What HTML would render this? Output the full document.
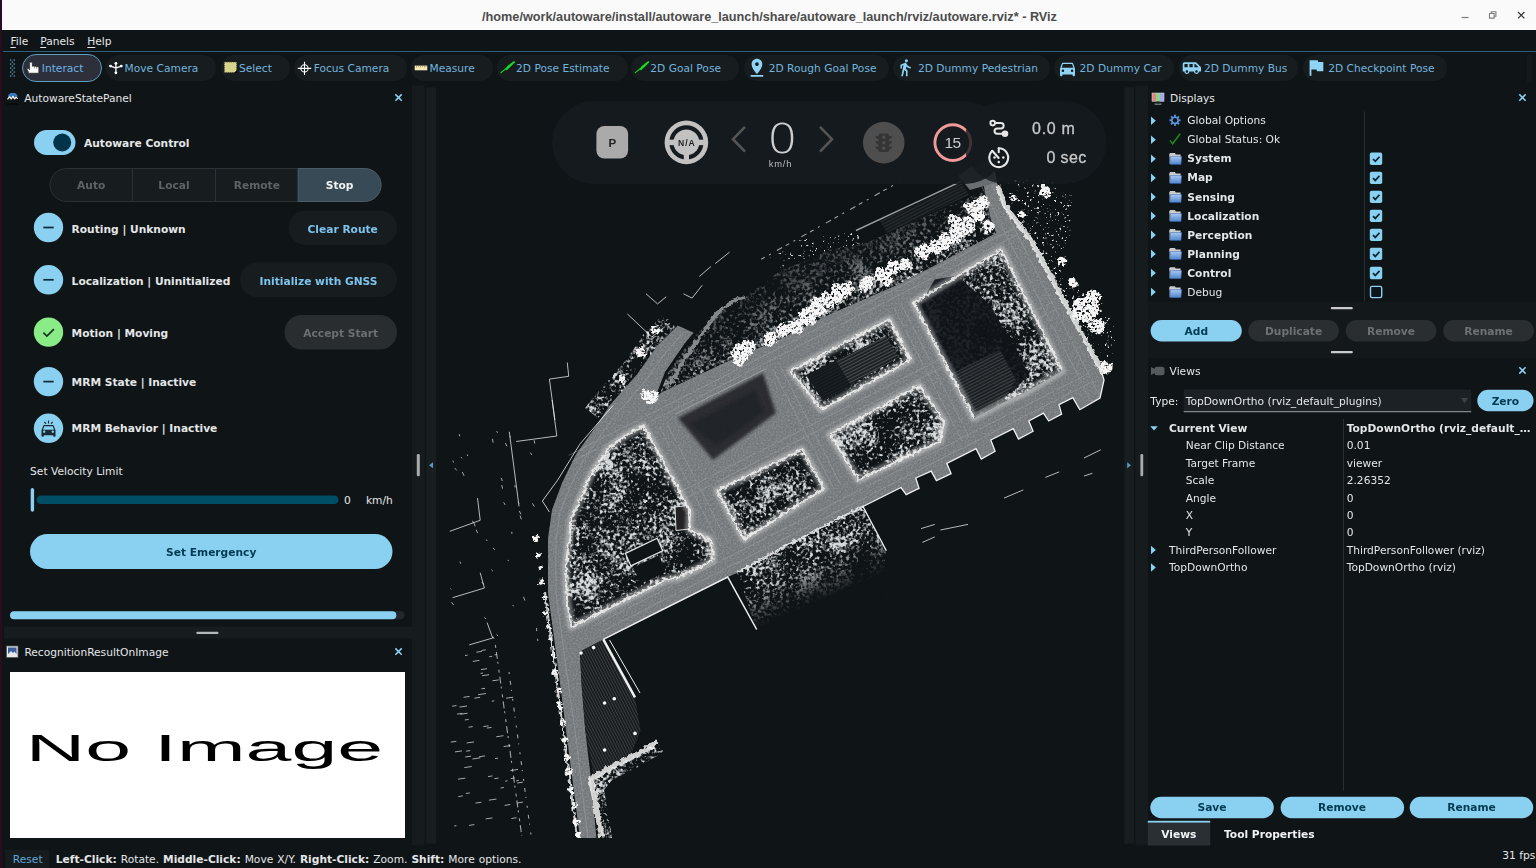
<!DOCTYPE html>
<html lang="en">
<head>
<meta charset="utf-8">
<title>RViz</title>
<style>
*{box-sizing:border-box;margin:0;padding:0}
html,body{width:1536px;height:868px;overflow:hidden;background:#0f1417}
body{position:relative;font-family:"DejaVu Sans","Liberation Sans",sans-serif;font-size:10.667px;color:#e4e6e7;line-height:1}
.abs{position:absolute}
.t{position:absolute;white-space:pre;line-height:14px;height:14px}
.b{font-weight:700}
/* title bar */
#titlebar{position:absolute;left:0;top:0;width:1536px;height:30.2px;background:#fafafa}
#edge{position:absolute;left:0;top:0;width:2.4px;height:868px;background:#2b0c1f}
#title{position:absolute;left:0;width:1536px;top:9.6px;text-align:center;font-family:"Liberation Sans","DejaVu Sans",sans-serif;font-weight:700;font-size:12.7px;color:#4c4c4c;line-height:15px;padding-left:3px}
/* menu */
#menuline{position:absolute;left:2.5px;top:51.1px;width:1534px;height:1.4px;background:#2f5f78}
.menu{position:absolute;top:34.8px;line-height:14px;color:#e4e6e7}
.menu u{text-decoration:underline;text-underline-offset:1.5px}
/* toolbar */
.pill{position:absolute;top:54.5px;height:27px;border-radius:13.5px;background:#171c1f;color:#72b4de;line-height:27px;white-space:pre}
.pill span{position:absolute;top:0;line-height:27px}
.pill svg{position:absolute}
#noimg{position:absolute;left:-3.1px;top:51.3px;width:394.900px;text-align:center;font-family:"Liberation Sans",sans-serif;font-size:37px;line-height:52px;color:#000;transform:scaleX(2.228);transform-origin:197.45px 0;white-space:pre}
</style>
</head>
<body>

<div id="titlebar"></div>
<div id="title">/home/work/autoware/install/autoware_launch/share/autoware_launch/rviz/autoware.rviz* - RViz</div>
<div id="edge"></div>
<svg class="abs" style="left:1450px;top:0" width="86" height="30" viewBox="1450 0 86 30">
<path d="M1461.5 17.5h7" stroke="#7d7d7d" stroke-width="1.2" fill="none"/>
<path d="M1489.5 13.5h4.6v4.6h-4.6z M1491.3 13.3v-1.6h4.6v4.6h-1.6" stroke="#7d7d7d" stroke-width="1.1" fill="none"/>
<path d="M1518 12l6.4 6.4M1524.4 12l-6.4 6.4" stroke="#3c3c3c" stroke-width="1.3" fill="none"/>
</svg>
<div class="menu" style="left:10.4px"><u>F</u>ile</div>
<div class="menu" style="left:40.2px"><u>P</u>anels</div>
<div class="menu" style="left:87.3px"><u>H</u>elp</div>
<div id="menuline"></div>
<svg class="abs" style="left:0;top:52px;z-index:3" width="1536" height="34" viewBox="0 52 1536 34"><g fill="#5ea5cc"><rect x="10" y="59.4" width="1.3" height="1.3"/><rect x="13.6" y="59.4" width="1.3" height="1.3"/><rect x="11.8" y="61.4" width="1.3" height="1.3"/><rect x="10" y="63.4" width="1.3" height="1.3"/><rect x="13.6" y="63.4" width="1.3" height="1.3"/><rect x="11.8" y="65.4" width="1.3" height="1.3"/><rect x="10" y="67.4" width="1.3" height="1.3"/><rect x="13.6" y="67.4" width="1.3" height="1.3"/><rect x="11.8" y="69.4" width="1.3" height="1.3"/><rect x="10" y="71.4" width="1.3" height="1.3"/><rect x="13.6" y="71.4" width="1.3" height="1.3"/><rect x="11.8" y="73.4" width="1.3" height="1.3"/><rect x="10" y="75.4" width="1.3" height="1.3"/><rect x="13.6" y="75.4" width="1.3" height="1.3"/></g><rect x="1527" y="55" width="4.5" height="27" fill="#14191c"/><path d="M29.600 63.300a1.350 1.350 0 0 1 2.700 0V66.500c.1-.6 2-.6 2.100 .2c.1-.6 2-.5 2.100 .3c.2-.5 2.200-.3 2.300 .7V73.200H28.300V71.600L27.100 69.700c-.2-.9 1-1.500 1.600-.9L29.600 69.800z" fill="#fff" stroke="#111" stroke-width=".6" stroke-linejoin="round"/><path d="M34.400 66.900v1.600M36.500 67.200v1.400" stroke="#333" stroke-width=".5"/><g stroke="#fff" stroke-width="1.3" fill="none" stroke-linecap="round"><path d="M115.900 63.600v9M110.700 66.100l5.200 1.900 5.200-1.900"/></g><g fill="#fff"><circle cx="115.900" cy="63.300" r="1.400"/><circle cx="115.900" cy="72.800" r="1.400"/><circle cx="110.500" cy="66.100" r="1.400"/><circle cx="121.300" cy="66.100" r="1.400"/></g><rect x="224.300" y="62" width="12.400" height="10.600" fill="#d8d48e" stroke="#3a3a28" stroke-width=".8" stroke-dasharray="1.200 1"/><path d="M237 72.900h-3l3-3z" fill="#000"/><g stroke="#fff" stroke-width="1.100" fill="none"><circle cx="304.500" cy="68.400" r="3.600"/><path d="M297.800 68.400h13.400M304.500 61.700v13.400"/></g><rect x="414.700" y="65.600" width="12.600" height="4.700" fill="#f5e9b8"/><path d="M416.500 65.600v2M418.500 65.600v1.500M420.500 65.600v2M422.500 65.600v1.500M424.500 65.600v2M426 65.600v1.500" stroke="#8a7a4a" stroke-width=".6"/><path d="M501.0 72.600L514.0 62.100" stroke="#10e020" stroke-width="1.200" stroke-linecap="round"/><path d="M506.5 69.400L514.2 62L508.3 66.300z" fill="#10e020" stroke="#10e020" stroke-width="1.600" stroke-linejoin="round"/><path d="M635.3 72.600L648.3 62.100" stroke="#10e020" stroke-width="1.200" stroke-linecap="round"/><path d="M640.8 69.400L648.5 62L642.5999999999999 66.300z" fill="#10e020" stroke="#10e020" stroke-width="1.600" stroke-linejoin="round"/><path transform="translate(746.2 57) scale(0.8958)" fill="#8fd3f5" d="M18 8c0-3.310-2.690-6-6-6S6 4.690 6 8c0 4.500 6 11 6 11s6-6.500 6-11zm-8 0c0-1.100.9-2 2-2s2 .9 2 2-.89 2-2 2c-1.100 0-2-.9-2-2zM5 20v2h14v-2H5z"/><path transform="translate(895.7 58.1) scale(0.7917)" fill="#8fd3f5" d="M13.5 5.5c1.1 0 2-.9 2-2s-.9-2-2-2-2 .9-2 2 .9 2 2 2zM9.8 8.9L7 23h2.1l1.8-8 2.1 2v6h2v-7.5l-2.1-2 .6-3C14.800 12 16.800 13 19 13v-2c-1.900 0-3.500-1-4.300-2.400l-1-1.600c-.4-.6-1-1-1.700-1-.3 0-.5.1-.8.1L6 8.300V13h2V9.600l1.800-.7"/><path transform="translate(1057.5 58.7) scale(0.8333)" fill="#8fd3f5" d="M18.92 6.01C18.72 5.42 18.16 5 17.5 5h-11c-.66 0-1.210.42-1.420 1.010L3 12v8c0 .55.45 1 1 1h1c.55 0 1-.45 1-1v-1h12v1c0 .55.45 1 1 1h1c.55 0 1-.45 1-1v-8l-2.080-5.990zM6.500 16c-.83 0-1.500-.67-1.500-1.500S5.670 13 6.500 13s1.500.67 1.500 1.500S7.330 16 6.500 16zm11 0c-.83 0-1.500-.67-1.500-1.500s.67-1.500 1.500-1.500 1.500.67 1.500 1.500-.67 1.500-1.500 1.500zM5 11l1.500-4.500h11L19 11H5z"/><path transform="translate(1181.9 58.1) scale(0.8333)" fill="#8fd3f5" d="M17 5H3c-1.100 0-2 .89-2 2v9h2c0 1.650 1.340 3 3 3s3-1.350 3-3h5.500c0 1.650 1.340 3 3 3s3-1.350 3-3H23v-5l-6-6zM3 11V7h4v4H3zm3 6.500c-.83 0-1.500-.67-1.500-1.500s.67-1.500 1.500-1.500 1.500.67 1.500 1.500-.67 1.500-1.500 1.500zm7-6.500H9V7h4v4zm4.500 6.500c-.83 0-1.500-.67-1.500-1.500s.67-1.500 1.500-1.500 1.500.67 1.500 1.500-.67 1.500-1.500 1.500zM15 11V7h1l4 4h-5z"/><path transform="translate(1305 56.6) scale(0.9167)" fill="#8fd3f5" d="M14.4 6L14 4H5v17h2v-7h5.600l.4 2h7V6z"/></svg>
<div class="pill" style="left:22px;width:80px;top:54.3px;height:27.7px;border-radius:14px;background:#2d2f3a;border:1.2px solid #5f9dbf"></div><div class="t" style="left:41.8px;top:61.5px;color:#6cb2e6">Interact</div>
<div class="pill" style="left:106px;width:109.7px;top:55.2px;height:26.2px"></div><div class="t" style="left:124.6px;top:61.5px;color:#72b4de">Move Camera</div>
<div class="pill" style="left:221px;width:69.0px;top:55.2px;height:26.2px"></div><div class="t" style="left:239px;top:61.5px;color:#72b4de">Select</div>
<div class="pill" style="left:294.3px;width:112.3px;top:55.2px;height:26.2px"></div><div class="t" style="left:313.7px;top:61.5px;color:#72b4de">Focus Camera</div>
<div class="pill" style="left:411px;width:82.3px;top:55.2px;height:26.2px"></div><div class="t" style="left:429.5px;top:61.5px;color:#72b4de">Measure</div>
<div class="pill" style="left:497px;width:130.5px;top:55.2px;height:26.2px"></div><div class="t" style="left:516.1px;top:61.5px;color:#72b4de">2D Pose Estimate</div>
<div class="pill" style="left:631.4px;width:108.0px;top:55.2px;height:26.2px"></div><div class="t" style="left:650.3px;top:61.5px;color:#72b4de">2D Goal Pose</div>
<div class="pill" style="left:743.7px;width:144.9px;top:55.2px;height:26.2px"></div><div class="t" style="left:768.7px;top:61.5px;color:#72b4de">2D Rough Goal Pose</div>
<div class="pill" style="left:892.5px;width:157.8px;top:55.2px;height:26.2px"></div><div class="t" style="left:917.9px;top:61.5px;color:#72b4de">2D Dummy Pedestrian</div>
<div class="pill" style="left:1054.2px;width:120.1px;top:55.2px;height:26.2px"></div><div class="t" style="left:1079.6px;top:61.5px;color:#72b4de">2D Dummy Car</div>
<div class="pill" style="left:1178.6px;width:119.7px;top:55.2px;height:26.2px"></div><div class="t" style="left:1204px;top:61.5px;color:#72b4de">2D Dummy Bus</div>
<div class="pill" style="left:1303px;width:143.5px;top:55.2px;height:26.2px"></div><div class="t" style="left:1328.2px;top:61.5px;color:#72b4de">2D Checkpoint Pose</div>

<svg class="abs" style="left:0;top:86px;z-index:2" width="412" height="560" viewBox="0 86 412 560">
<!-- title icon -->
<path d="M8.2 95.3l2.300-2.300h4.600l2.300 2.300v1.500h-9.200z" fill="#3a78c2"/>
<path d="M7.5 99.3l2.200-2.600 1.500 2.300 1.700-2.600 1.700 2.500 1.400-1.800 1.600 1.600" stroke="#fff" stroke-width="1.200" fill="none" stroke-linejoin="round"/>
<path d="M6.500 104h12" stroke="#000" stroke-width=".8"/>
<!-- close x -->
<path d="M395.400 94.400l6.300 6.300M401.700 94.400l-6.300 6.300" stroke="#8fd3f5" stroke-width="1.500"/>
<!-- toggle -->
<rect x="34" y="130" width="41.500" height="25" rx="12.500" fill="#8ad0f0"/>
<circle cx="62.200" cy="142.500" r="9" fill="#00344a"/>
<!-- segmented -->
<path d="M66.500 168.500h231.700v33h-231.700a16.500 16.500 0 0 1 0-33z" fill="#171c1f" stroke="#2c3135" stroke-width="1"/>
<path d="M298.200 168.500h66.400a16.500 16.500 0 0 1 0 33h-66.400z" fill="#374a55" stroke="#4b5c66" stroke-width="1"/>
<path d="M132.500 168.500v33M215.500 168.500v33" stroke="#2c3135" stroke-width="1"/>
<!-- status circles -->
<circle cx="48.500" cy="227.500" r="14.700" fill="#8ad0f0"/><path d="M43.300 227.500h10.400" stroke="#0f2a38" stroke-width="1.700"/>
<circle cx="48.500" cy="279.800" r="14.700" fill="#8ad0f0"/><path d="M43.300 279.800h10.400" stroke="#0f2a38" stroke-width="1.700"/>
<circle cx="48.500" cy="332.100" r="14.700" fill="#8aec86"/><path d="M43.400 332.600l3.500 3.500 7-7" stroke="#12301a" stroke-width="1.600" fill="none"/>
<circle cx="48.500" cy="381.600" r="14.700" fill="#8ad0f0"/><path d="M43.300 381.600h10.400" stroke="#0f2a38" stroke-width="1.700"/>
<circle cx="48.500" cy="428.300" r="14.700" fill="#8ad0f0"/>
<g transform="translate(39.140 418.070) scale(.78)" fill="#1a2a33"><path d="M18.920 10.010C18.720 9.420 18.160 9 17.500 9h-11c-.66 0-1.210.42-1.420 1.010L3 16v7c0 .55.45 1 1 1h1c.55 0 1-.45 1-1v-1h12v1c0 .55.45 1 1 1h1c.55 0 1-.45 1-1v-7l-2.080-5.990zM6.500 19c-.83 0-1.500-.67-1.500-1.500S5.670 16 6.500 16s1.500.67 1.500 1.500S7.330 19 6.500 19zm11 0c-.83 0-1.500-.67-1.500-1.500s.67-1.500 1.500-1.500 1.500.67 1.500 1.500-.67 1.500-1.500 1.500zM5 15l1.500-4.500h11L19 15H5z"/><path d="M11.300 3h1.400v4h-1.400zM6.100 5.400l1-1 2.300 2.400-1 1zM17.900 5.400l-1-1-2.300 2.400 1 1z"/></g>
<!-- buttons -->
<rect x="288.500" y="210.500" width="108.500" height="34.500" rx="17.250" fill="#171c1f"/>
<rect x="240" y="262.500" width="157" height="34.500" rx="17.250" fill="#171c1f"/>
<rect x="284.500" y="315" width="112.500" height="34.500" rx="17.250" fill="#292d30"/>
<!-- slider -->
<rect x="36.500" y="495.400" width="302" height="8.600" rx="4.300" fill="#004d66"/>
<rect x="30.700" y="488" width="3.400" height="23.700" rx="1.700" fill="#8ad0f0"/>
<!-- emergency -->
<rect x="30" y="534" width="362.500" height="35" rx="17.500" fill="#8ad0f0"/>
<!-- h scrollbar -->
<rect x="10" y="611.200" width="394.500" height="8" rx="4" fill="#23282c"/>
<rect x="10" y="611.200" width="386.300" height="8" rx="4" fill="#8ad0f0"/>
<!-- splitter band -->
<rect x="4" y="626.600" width="408" height="12" fill="#171c1f"/>
<rect x="196.300" y="631.800" width="22.200" height="2.200" rx="1" fill="#b4b8ba"/>
</svg>
<div class="t " style="left:24.2px;top:91.6px;">AutowareStatePanel</div>
<div class="t b" style="left:84px;top:136.6px;">Autoware Control</div>
<div class="t b" style="left:-8.8px;width:200px;text-align:center;top:178.6px;color:#5e6366;z-index:3">Auto</div>
<div class="t b" style="left:74.0px;width:200px;text-align:center;top:178.6px;color:#5e6366;z-index:3">Local</div>
<div class="t b" style="left:156.8px;width:200px;text-align:center;top:178.6px;color:#5e6366;z-index:3">Remote</div>
<div class="t b" style="left:239.6px;width:200px;text-align:center;top:178.6px;color:#f0f2f3;z-index:3">Stop</div>
<div class="t b" style="left:71.6px;top:222.6px;">Routing | Unknown</div>
<div class="t b" style="left:71.6px;top:274.6px;">Localization | Uninitialized</div>
<div class="t b" style="left:71.6px;top:326.6px;">Motion | Moving</div>
<div class="t b" style="left:71.6px;top:375.6px;">MRM State | Inactive</div>
<div class="t b" style="left:71.6px;top:421.6px;">MRM Behavior | Inactive</div>
<div class="t b" style="left:242.7px;width:200px;text-align:center;top:222.6px;color:#7cc4ee;z-index:3">Clear Route</div>
<div class="t b" style="left:218.5px;width:200px;text-align:center;top:274.6px;color:#7cc4ee;z-index:3">Initialize with GNSS</div>
<div class="t b" style="left:240.7px;width:200px;text-align:center;top:326.6px;color:#6a6f72;z-index:3">Accept Start</div>
<div class="t " style="left:30.1px;top:464.6px;">Set Velocity Limit</div>
<div class="t " style="left:344px;top:493.6px;">0</div>
<div class="t " style="left:365.9px;top:493.6px;">km/h</div>
<div class="t b" style="left:111.2px;width:200px;text-align:center;top:545.6px;color:#003a52;z-index:3">Set Emergency</div>
<svg class="abs" style="left:0;top:640px;z-index:2" width="412" height="30" viewBox="0 640 412 30">
<rect x="6.500" y="646" width="11.500" height="11.500" fill="#e8e8e8" stroke="#555" stroke-width=".8"/>
<rect x="8" y="647.500" width="8.500" height="6.500" fill="#3b5f9a"/>
<path d="M8 654l3-3 2 2 1.500-1.500 2 2.500z" fill="#dfe6f0"/>
<path d="M395.400 648.400l6.300 6.300M401.700 648.400l-6.300 6.300" stroke="#8fd3f5" stroke-width="1.500"/>
</svg>
<div class="t " style="left:24.4px;top:645.6px;">RecognitionResultOnImage</div>
<div class="abs" style="left:9.800px;top:672.200px;width:394.900px;height:165.800px;background:#fff;overflow:hidden"><div id="noimg">No Image</div></div>
<svg class="abs" style="left:436px;top:86px" width="688" height="752" viewBox="436 86 688 752">
<defs>
<filter id="veg" filterUnits="userSpaceOnUse" x="436" y="86" width="688" height="752" color-interpolation-filters="sRGB">
<feTurbulence type="fractalNoise" baseFrequency="0.3" numOctaves="2" seed="7" result="n"/>
<feColorMatrix in="n" type="matrix" values="0 0 0 0 1  0 0 0 0 1  0 0 0 0 1  .5 .5 0 0 0" result="a1"/>
<feTurbulence type="fractalNoise" baseFrequency="0.04" numOctaves="2" seed="21" result="m"/>
<feColorMatrix in="m" type="matrix" values="0 0 0 0 1  0 0 0 0 1  0 0 0 0 1  .5 .5 0 0 0" result="a2"/>
<feComposite in="a1" in2="a2" operator="arithmetic" k1="0" k2="1" k3=".5" k4="-.25" result="mix"/>
<feColorMatrix in="mix" type="matrix" values="0 0 0 0 .84  0 0 0 0 .85  0 0 0 0 .86  0 0 0 5.5 -2.62" result="sp"/>
<feComposite in="sp" in2="SourceGraphic" operator="in"/>
</filter>
<filter id="veg2" filterUnits="userSpaceOnUse" x="436" y="86" width="688" height="752" color-interpolation-filters="sRGB">
<feTurbulence type="fractalNoise" baseFrequency="0.4" numOctaves="2" seed="11" result="n"/>
<feColorMatrix in="n" type="matrix" values="0 0 0 0 .9  0 0 0 0 .9  0 0 0 0 .9  6 6 0 0 -7.3" result="sp"/>
<feComposite in="sp" in2="SourceGraphic" operator="in"/>
</filter>
<filter id="rough" filterUnits="userSpaceOnUse" x="436" y="86" width="688" height="752">
<feTurbulence type="fractalNoise" baseFrequency="0.25" numOctaves="2" seed="3" result="n"/>
<feDisplacementMap in="SourceGraphic" in2="n" scale="5" xChannelSelector="R" yChannelSelector="G"/>
</filter>
<filter id="cloud" filterUnits="userSpaceOnUse" x="436" y="86" width="688" height="752" color-interpolation-filters="sRGB">
<feTurbulence type="fractalNoise" baseFrequency="0.25" numOctaves="2" seed="3" result="n"/>
<feDisplacementMap in="SourceGraphic" in2="n" scale="6" xChannelSelector="R" yChannelSelector="G" result="d"/>
<feTurbulence type="fractalNoise" baseFrequency="0.4" numOctaves="2" seed="9" result="n2"/>
<feColorMatrix in="n2" type="matrix" values="0 0 0 0 1  0 0 0 0 1  0 0 0 0 1  5 5 0 0 -3.6" result="h"/>
<feComposite in="d" in2="h" operator="in"/>
</filter>
<filter id="roadtex" filterUnits="userSpaceOnUse" x="436" y="86" width="688" height="752" color-interpolation-filters="sRGB">
<feTurbulence type="fractalNoise" baseFrequency="0.6" numOctaves="1" seed="2" result="n"/>
<feColorMatrix in="n" type="matrix" values="0 0 0 0 1  0 0 0 0 1  0 0 0 0 1  1.2 0 0 0 -.45" result="sp"/>
<feComposite in="sp" in2="SourceGraphic" operator="in"/>
</filter>
<filter id="blur2" filterUnits="userSpaceOnUse" x="436" y="86" width="688" height="752"><feGaussianBlur stdDeviation="1.6"/></filter>
<pattern id="scan" width="3" height="3" patternUnits="userSpaceOnUse" patternTransform="rotate(-27)"><rect width="3" height="3" fill="#1a1f22"/><rect width="3" height="1.1" fill="#4a4e50"/></pattern>
<pattern id="scan2" width="2.6" height="2.6" patternUnits="userSpaceOnUse" patternTransform="rotate(63)"><rect width="2.6" height="2.6" fill="#15191c"/><rect width="2.6" height="1" fill="#3c4043"/></pattern>
<linearGradient id="b1g" gradientUnits="userSpaceOnUse" x1="700" y1="392" x2="745" y2="440"><stop offset="0" stop-color="#111619" stop-opacity="1"/><stop offset=".5" stop-color="#111619" stop-opacity=".75"/><stop offset="1" stop-color="#111619" stop-opacity="0"/></linearGradient>
<linearGradient id="fade7" gradientUnits="userSpaceOnUse" x1="800" y1="535" x2="828" y2="598"><stop offset="0" stop-color="#fff"/><stop offset=".42" stop-color="#fff"/><stop offset=".7" stop-color="#777"/><stop offset="1" stop-color="#000"/></linearGradient>
<linearGradient id="fadeb" gradientUnits="userSpaceOnUse" x1="776.8" y1="291.1" x2="799.5" y2="335.6"><stop offset="0" stop-color="#4a4a4a"/><stop offset=".55" stop-color="#9a9a9a"/><stop offset="1" stop-color="#fff"/></linearGradient>
<mask id="mb" maskUnits="userSpaceOnUse" x="436" y="86" width="688" height="752"><rect x="436" y="86" width="688" height="752" fill="url(#fadeb)"/></mask>
<mask id="m7" maskUnits="userSpaceOnUse" x="436" y="86" width="688" height="752"><rect x="436" y="86" width="688" height="752" fill="url(#fade7)"/></mask>
</defs>
<rect x="436" y="86" width="688" height="752" fill="#0f1417"/>
<polygon points="677.7,325.5 693.6,332.7 685.0,343.0 665.0,372.0 655.0,398.0 662.0,392.0 727.0,361.5 780.0,339.0 830.0,314.0 900.0,283.5 996.0,233.0 990.5,219.0 987.7,205.0 983.6,185.0 979.0,168.0 994.0,168.0 997.4,184.6 1004.3,205.3 1030.0,240.0 1102.0,373.5 1104.0,380.0 1100.0,398.0 1079.8,409.7 1072.9,397.6 1059.0,404.6 1061.6,414.1 1048.7,421.0 1043.5,413.2 1028.8,421.0 1033.1,431.3 1018.5,439.1 1013.3,428.7 990.8,440.0 995.1,451.2 981.3,459.0 976.1,448.6 946.8,463.3 951.1,473.7 936.4,480.6 931.2,471.1 915.7,478.0 919.1,488.3 906.2,494.7 901.0,487.5 863.0,506.5 832.5,521.6 780.0,549.3 737.4,572.8 727.7,577.0 603.3,639.4 579.8,651.8 582.0,690.0 585.3,730.6 590.8,777.6 596.4,838.0 580.0,838.0 566.0,730.0 559.0,675.0 553.0,630.0 548.0,593.0 548.0,538.0 552.0,510.0 562.0,483.0 575.6,455.0 595.0,427.6 610.0,405.0 637.8,373.5 657.0,346.0" fill="#73777a"/>
<polygon points="677.7,325.5 693.6,332.7 685.0,343.0 665.0,372.0 655.0,398.0 662.0,392.0 727.0,361.5 780.0,339.0 830.0,314.0 900.0,283.5 996.0,233.0 990.5,219.0 987.7,205.0 983.6,185.0 979.0,168.0 994.0,168.0 997.4,184.6 1004.3,205.3 1030.0,240.0 1102.0,373.5 1104.0,380.0 1100.0,398.0 1079.8,409.7 1072.9,397.6 1059.0,404.6 1061.6,414.1 1048.7,421.0 1043.5,413.2 1028.8,421.0 1033.1,431.3 1018.5,439.1 1013.3,428.7 990.8,440.0 995.1,451.2 981.3,459.0 976.1,448.6 946.8,463.3 951.1,473.7 936.4,480.6 931.2,471.1 915.7,478.0 919.1,488.3 906.2,494.7 901.0,487.5 863.0,506.5 832.5,521.6 780.0,549.3 737.4,572.8 727.7,577.0 603.3,639.4 579.8,651.8 582.0,690.0 585.3,730.6 590.8,777.6 596.4,838.0 580.0,838.0 566.0,730.0 559.0,675.0 553.0,630.0 548.0,593.0 548.0,538.0 552.0,510.0 562.0,483.0 575.6,455.0 595.0,427.6 610.0,405.0 637.8,373.5 657.0,346.0" fill="#fff" filter="url(#roadtex)" opacity=".35"/>
<g stroke="#a4a8aa" stroke-width=".8" fill="none" opacity=".55">
<polyline points="568.8,455.4 1014.3,228.4" stroke-dasharray="30 3 50 4 18 2"/>
<polyline points="571.9,461.7 1017.4,234.7" stroke-dasharray="30 3 50 4 18 2"/>
<polyline points="682.2,490.8 1051.9,302.4" stroke-dasharray="30 3 50 4 18 2"/>
<polyline points="685.8,497.9 1055.6,309.5" stroke-dasharray="30 3 50 4 18 2"/>
<polyline points="598.2,623.4 1088.3,373.7" stroke-dasharray="30 3 50 4 18 2"/>
<polyline points="602.3,631.4 1092.3,381.7" stroke-dasharray="30 3 50 4 18 2"/>
<polyline points="659.8,427.0 722.4,550.0" stroke-dasharray="22 3 40 4"/>
<polyline points="666.9,423.4 729.6,546.3" stroke-dasharray="22 3 40 4"/>
<polyline points="772.9,369.3 835.6,492.3" stroke-dasharray="22 3 40 4"/>
<polyline points="780.1,365.7 842.7,488.7" stroke-dasharray="22 3 40 4"/>
<polyline points="894.1,307.6 962.2,441.3" stroke-dasharray="22 3 40 4"/>
<polyline points="901.2,304.0 969.3,437.6" stroke-dasharray="22 3 40 4"/>
<polyline points="958.1,140.3 1089.8,398.7" stroke-dasharray="22 3 40 4"/>
<polyline points="967.0,135.8 1098.7,394.2" stroke-dasharray="22 3 40 4"/>
<polyline points="588.0,838.0 575.0,730.0 567.0,675.0 561.0,630.0 556.0,593.0 556.0,540.0 560.0,512.0 570.0,487.0 584.0,459.0 603.0,432.0 620.0,410.0 646.0,380.0 666.0,352.0 684.0,332.0"/>
</g>
<polygon points="579.8,651.8 603.3,639.4 635.0,697.4 640.5,730.6 629.5,758.2 593.6,774.8 585.3,730.6 582.0,690.0" fill="url(#scan2)"/>
<polygon points="643.4,426.3 660.0,456.0 679.3,491.2 690.0,512.0 689.0,530.0 709.7,539.6 712.5,550.0 712.5,560.4 679.3,577.0 665.5,579.7 571.5,626.7 567.0,600.0 566.0,566.0 571.5,519.0 591.0,474.6 607.4,449.8 625.0,436.0" fill="#0f1417"/>
<polygon points="791.0,370.8 889.2,319.6 910.0,359.7 821.5,409.5" fill="#0f1417"/>
<polygon points="914.0,303.0 1001.2,249.7 1062.0,370.8 1026.0,392.0 1002.0,403.0 974.0,418.0" fill="#0f1417"/>
<polygon points="717.4,490.8 802.0,449.7 823.8,488.4 744.0,539.2" fill="#0f1417"/>
<polygon points="829.8,434.6 919.0,385.5 944.0,422.0 940.0,441.0 858.6,479.7" fill="#0f1417"/>
<polygon points="737.4,572.8 780.0,549.3 832.5,521.6 863.0,506.5 886.4,550.7 880.0,600.0 800.0,640.0 757.0,630.0" fill="#0f1417"/>
<polygon points="661.0,391.0 668.0,373.0 687.0,345.0 698.0,333.0 716.0,313.0 744.0,297.0 780.0,271.0 830.0,250.0 863.0,244.0 971.0,196.0 984.0,192.0 987.7,205.0 990.5,219.0 996.0,233.0 900.0,283.5 830.0,314.0 780.0,339.0 727.0,361.5 662.0,392.0" fill="#0f1417"/>
<g mask="url(#mb)"><polygon points="661.0,391.0 668.0,373.0 687.0,345.0 698.0,333.0 716.0,313.0 744.0,297.0 780.0,271.0 830.0,250.0 863.0,244.0 971.0,196.0 984.0,192.0 987.7,205.0 990.5,219.0 996.0,233.0 900.0,283.5 830.0,314.0 780.0,339.0 727.0,361.5 662.0,392.0" fill="#fff" filter="url(#veg)"/></g>
<g filter="url(#veg)">
<polygon points="643.4,426.3 660.0,456.0 679.3,491.2 690.0,512.0 689.0,530.0 709.7,539.6 712.5,550.0 712.5,560.4 679.3,577.0 665.5,579.7 571.5,626.7 567.0,600.0 566.0,566.0 571.5,519.0 591.0,474.6 607.4,449.8 625.0,436.0" fill="#fff"/>
<polygon points="791.0,370.8 889.2,319.6 910.0,359.7 821.5,409.5" fill="#fff"/>
<polygon points="914.0,303.0 1001.2,249.7 1062.0,370.8 1026.0,392.0 1002.0,403.0 974.0,418.0" fill="#fff"/>
<polygon points="717.4,490.8 802.0,449.7 823.8,488.4 744.0,539.2" fill="#fff"/>
<polygon points="829.8,434.6 919.0,385.5 944.0,422.0 940.0,441.0 858.6,479.7" fill="#fff"/>
<polygon points="598.0,418.0 610.0,405.0 637.8,373.5 657.0,346.0 675.0,327.0 664.0,314.0 645.0,332.0 626.0,360.0 598.0,392.0 585.0,408.0" fill="#fff"/>
<polygon points="591.0,779.0 657.2,741.6 664.0,752.0 640.0,766.0 612.0,780.0 604.0,790.0 612.0,838.0 602.0,838.0 595.0,800.0" fill="#fff"/>
</g>
<g mask="url(#m7)"><polygon points="737.4,572.8 780.0,549.3 832.5,521.6 863.0,506.5 886.4,550.7 880.0,600.0 800.0,640.0 757.0,630.0" fill="#fff" filter="url(#veg)"/></g>
<polygon points="806.0,375.0 886.0,336.0 899.0,357.0 823.0,401.0" fill="url(#scan)"/>
<polygon points="806.0,375.0 836.0,360.5 852.0,387.0 823.0,401.0" fill="#12171a" opacity=".8"/>
<polygon points="934.8,279.5 957.0,275.4 990.0,304.4 1028.8,373.5 1015.0,390.0 973.5,415.0 951.4,373.5 926.5,323.8 918.2,307.2" fill="#10151a" opacity=".92"/>
<polygon points="951.0,374.0 1000.0,350.0 1016.0,380.0 1002.0,403.0 974.0,418.0" fill="url(#scan)" opacity=".8"/>
<polygon points="625.4,553.4 657.2,538.2 662.7,550.7 630.9,565.9" fill="#0f1417" stroke="#e8e8e8" stroke-width="1.2"/>
<polygon points="633.7,567.3 659.0,555.0 666.0,572.0 640.0,584.0" fill="#0f1417"/>
<polygon points="675.0,507.0 688.0,505.5 689.5,529.0 676.0,530.5" fill="#222" stroke="#ddd" stroke-width="1"/>
<g fill="none" stroke="#e4e4e4" stroke-width="8" opacity=".42" filter="url(#blur2)" stroke-linejoin="round">
<polygon points="643.4,426.3 660.0,456.0 679.3,491.2 690.0,512.0 689.0,530.0 709.7,539.6 712.5,550.0 712.5,560.4 679.3,577.0 665.5,579.7 571.5,626.7 567.0,600.0 566.0,566.0 571.5,519.0 591.0,474.6 607.4,449.8 625.0,436.0"/>
<polygon points="791.0,370.8 889.2,319.6 910.0,359.7 821.5,409.5"/>
<polygon points="914.0,303.0 1001.2,249.7 1062.0,370.8 1026.0,392.0 1002.0,403.0 974.0,418.0"/>
<polygon points="717.4,490.8 802.0,449.7 823.8,488.4 744.0,539.2"/>
<polygon points="829.8,434.6 919.0,385.5 944.0,422.0 940.0,441.0 858.6,479.7"/>
</g>
<g fill="none" stroke="#f2f2f2" stroke-width="2.2" filter="url(#rough)" opacity=".85" stroke-linejoin="round">
<polygon points="643.4,426.3 660.0,456.0 679.3,491.2 690.0,512.0 689.0,530.0 709.7,539.6 712.5,550.0 712.5,560.4 679.3,577.0 665.5,579.7 571.5,626.7 567.0,600.0 566.0,566.0 571.5,519.0 591.0,474.6 607.4,449.8 625.0,436.0"/>
<polygon points="791.0,370.8 889.2,319.6 910.0,359.7 821.5,409.5"/>
<polygon points="717.4,490.8 802.0,449.7 823.8,488.4 744.0,539.2"/>
<polygon points="829.8,434.6 919.0,385.5 944.0,422.0 940.0,441.0 858.6,479.7"/>
<polyline points="974.0,418.0 914.0,303.0 1001.2,249.7 1062.0,370.8"/>
<polyline points="737.4,572.8 780.0,549.3 832.5,521.6 863.0,506.5"/>
<polyline points="998.0,186.0 1005.0,206.0 1031.5,241.0 1103.5,374.0" stroke-width="5"/>
<polyline points="548.0,593.0 553.0,630.0 559.0,675.0 566.0,730.0 580.0,838.0" stroke-width="2" transform="translate(-3 0)"/>
<polyline points="602.0,838.0 595.0,800.0 591.0,779.0 613.0,766.5 629.5,758.2 646.0,750.0 657.2,741.6" stroke-width="5.5"/>
</g>
<polygon points="678.0,418.0 763.0,373.0 776.0,413.0 713.0,460.0" fill="#13171a" opacity=".78" filter="url(#blur2)"/>
<polygon points="690.0,424.0 755.0,390.0 764.0,412.0 716.0,446.0" fill="#0f1316" opacity=".35" filter="url(#blur2)"/>
<polyline points="675.2,414.0 765.8,369.0" stroke="#9a9ea0" stroke-width="1" fill="none"/>
<polygon points="856.0,230.5 962.0,181.0 971.0,196.0 863.0,244.0" fill="#0f1417"/>
<polygon points="880.0,221.0 962.0,183.0 969.0,195.0 887.0,233.0" fill="url(#scan)" opacity=".45"/>
<polyline points="856.0,230.5 962.0,181.0" stroke="#9a9ea0" stroke-width="1.4" fill="none"/>
<polygon points="958.0,176.0 972.0,166.0 990.0,160.0 996.0,183.0 984.0,186.0 970.0,190.0" fill="#6a6e70"/>
<g fill="#f6f6f6" filter="url(#cloud)">
<circle cx="649.0" cy="397.5" r="6.4"/><circle cx="645.5" cy="394.1" r="4.7"/><circle cx="653.5" cy="395.8" r="5.0"/><circle cx="652.6" cy="398.2" r="5.1"/><circle cx="645.7" cy="393.0" r="3.1"/><circle cx="646.4" cy="398.0" r="4.1"/>
<circle cx="740.0" cy="352.0" r="8.8"/><circle cx="738.0" cy="351.0" r="4.6"/><circle cx="738.6" cy="359.6" r="6.4"/><circle cx="743.8" cy="357.9" r="4.3"/><circle cx="737.8" cy="350.0" r="3.9"/><circle cx="742.4" cy="349.5" r="4.6"/>
<circle cx="747.0" cy="346.0" r="6.4"/><circle cx="752.4" cy="345.4" r="3.5"/><circle cx="750.9" cy="345.0" r="4.4"/><circle cx="748.6" cy="351.5" r="4.5"/><circle cx="752.4" cy="344.8" r="3.5"/><circle cx="745.5" cy="347.8" r="3.1"/>
<circle cx="770.0" cy="338.0" r="6.4"/><circle cx="772.7" cy="339.2" r="4.2"/><circle cx="774.6" cy="338.1" r="3.6"/><circle cx="768.1" cy="342.8" r="4.0"/><circle cx="768.5" cy="341.4" r="4.5"/><circle cx="775.5" cy="340.1" r="2.9"/>
<circle cx="782.0" cy="331.0" r="6.4"/><circle cx="782.0" cy="325.7" r="2.8"/><circle cx="782.8" cy="327.9" r="4.2"/><circle cx="783.8" cy="331.1" r="3.2"/><circle cx="784.4" cy="330.3" r="4.6"/><circle cx="787.2" cy="328.5" r="3.6"/>
<circle cx="795.0" cy="326.0" r="6.4"/><circle cx="792.6" cy="329.1" r="4.7"/><circle cx="798.8" cy="329.1" r="4.7"/><circle cx="796.1" cy="324.6" r="5.1"/><circle cx="797.6" cy="327.7" r="4.3"/><circle cx="797.7" cy="324.5" r="5.0"/>
<circle cx="806.0" cy="318.0" r="7.2"/><circle cx="802.8" cy="317.1" r="4.0"/><circle cx="807.0" cy="320.0" r="3.6"/><circle cx="803.5" cy="311.8" r="3.6"/><circle cx="812.4" cy="320.0" r="4.6"/><circle cx="803.5" cy="319.7" r="4.8"/>
<circle cx="817.0" cy="309.0" r="8.0"/><circle cx="819.1" cy="305.0" r="4.8"/><circle cx="823.6" cy="311.4" r="3.6"/><circle cx="810.4" cy="309.3" r="3.9"/><circle cx="816.2" cy="301.8" r="5.4"/><circle cx="817.6" cy="306.5" r="4.8"/>
<circle cx="826.0" cy="300.0" r="7.2"/><circle cx="829.5" cy="304.8" r="3.9"/><circle cx="819.5" cy="302.0" r="5.5"/><circle cx="830.0" cy="299.4" r="4.5"/><circle cx="825.5" cy="295.9" r="3.9"/><circle cx="823.9" cy="301.4" r="4.2"/>
<circle cx="838.0" cy="293.0" r="7.2"/><circle cx="844.5" cy="292.5" r="4.8"/><circle cx="834.5" cy="293.0" r="3.4"/><circle cx="837.2" cy="298.6" r="5.5"/><circle cx="834.3" cy="297.4" r="5.2"/><circle cx="836.3" cy="288.2" r="5.2"/>
<circle cx="848.0" cy="288.0" r="6.4"/><circle cx="844.9" cy="291.6" r="3.5"/><circle cx="843.0" cy="288.4" r="4.5"/><circle cx="846.4" cy="293.5" r="4.4"/><circle cx="846.6" cy="287.2" r="4.1"/><circle cx="848.0" cy="292.6" r="3.9"/>
<circle cx="866.0" cy="284.0" r="6.4"/><circle cx="867.8" cy="279.9" r="4.7"/><circle cx="863.4" cy="287.6" r="4.6"/><circle cx="867.5" cy="281.2" r="4.8"/><circle cx="869.2" cy="280.6" r="5.1"/><circle cx="869.7" cy="283.0" r="4.1"/>
<circle cx="884.0" cy="276.0" r="7.2"/><circle cx="887.0" cy="281.1" r="5.7"/><circle cx="878.8" cy="276.7" r="5.1"/><circle cx="883.7" cy="273.4" r="5.3"/><circle cx="879.5" cy="273.5" r="4.3"/><circle cx="880.0" cy="272.0" r="4.9"/>
<circle cx="893.0" cy="268.0" r="7.2"/><circle cx="892.6" cy="266.1" r="3.6"/><circle cx="888.3" cy="269.8" r="3.7"/><circle cx="891.1" cy="263.5" r="3.3"/><circle cx="890.1" cy="268.5" r="3.3"/><circle cx="895.3" cy="270.5" r="3.6"/>
<circle cx="905.8" cy="263.0" r="5.6"/><circle cx="906.3" cy="264.4" r="3.4"/><circle cx="903.1" cy="265.6" r="3.7"/><circle cx="906.2" cy="267.9" r="2.5"/><circle cx="903.8" cy="264.4" r="3.3"/><circle cx="909.2" cy="266.0" r="3.2"/>
<circle cx="922.0" cy="252.0" r="7.2"/><circle cx="926.7" cy="253.1" r="3.4"/><circle cx="918.7" cy="251.0" r="4.7"/><circle cx="927.7" cy="250.5" r="4.3"/><circle cx="923.9" cy="247.4" r="4.1"/><circle cx="925.0" cy="255.7" r="4.7"/>
<circle cx="934.0" cy="246.0" r="6.4"/><circle cx="939.6" cy="244.4" r="4.3"/><circle cx="930.7" cy="250.5" r="2.8"/><circle cx="937.2" cy="248.6" r="4.3"/><circle cx="936.8" cy="249.4" r="4.9"/><circle cx="931.5" cy="248.5" r="3.3"/>
<circle cx="946.0" cy="240.0" r="7.2"/><circle cx="944.3" cy="246.4" r="4.2"/><circle cx="952.1" cy="238.5" r="4.8"/><circle cx="945.6" cy="246.6" r="4.5"/><circle cx="943.1" cy="241.7" r="5.8"/><circle cx="942.8" cy="240.2" r="4.4"/>
<circle cx="957.0" cy="232.0" r="7.2"/><circle cx="960.5" cy="235.4" r="4.3"/><circle cx="955.5" cy="237.5" r="5.4"/><circle cx="961.4" cy="232.4" r="3.9"/><circle cx="962.2" cy="229.8" r="3.8"/><circle cx="956.7" cy="234.6" r="5.8"/>
<circle cx="955.0" cy="222.0" r="6.4"/><circle cx="953.9" cy="226.1" r="3.9"/><circle cx="952.4" cy="218.6" r="4.6"/><circle cx="958.6" cy="225.3" r="3.5"/><circle cx="952.0" cy="221.4" r="3.5"/><circle cx="951.4" cy="221.3" r="3.7"/>
<circle cx="968.0" cy="226.0" r="7.2"/><circle cx="967.9" cy="221.3" r="3.2"/><circle cx="967.9" cy="230.1" r="5.6"/><circle cx="971.4" cy="223.1" r="3.2"/><circle cx="968.7" cy="222.1" r="4.7"/><circle cx="966.7" cy="221.2" r="4.5"/>
<circle cx="978.0" cy="215.0" r="7.2"/><circle cx="981.2" cy="213.0" r="4.2"/><circle cx="979.7" cy="212.8" r="4.0"/><circle cx="979.0" cy="213.1" r="5.4"/><circle cx="976.7" cy="211.3" r="3.9"/><circle cx="979.2" cy="208.8" r="3.5"/>
<circle cx="981.0" cy="203.0" r="5.6"/><circle cx="977.5" cy="203.5" r="3.5"/><circle cx="980.0" cy="204.7" r="3.7"/><circle cx="981.6" cy="201.5" r="2.9"/><circle cx="982.9" cy="199.0" r="3.8"/><circle cx="985.1" cy="203.7" r="4.5"/>
<circle cx="988.0" cy="226.0" r="5.6"/><circle cx="992.1" cy="226.0" r="2.6"/><circle cx="989.2" cy="224.1" r="3.8"/><circle cx="992.0" cy="224.8" r="2.7"/><circle cx="986.7" cy="230.8" r="2.8"/><circle cx="985.7" cy="224.1" r="2.8"/>
<circle cx="972.0" cy="208.0" r="5.6"/><circle cx="970.9" cy="206.9" r="2.7"/><circle cx="970.8" cy="209.2" r="2.6"/><circle cx="968.2" cy="206.1" r="4.3"/><circle cx="974.0" cy="210.3" r="3.1"/><circle cx="969.3" cy="206.1" r="4.4"/>
<circle cx="640.0" cy="352.0" r="4.8"/><circle cx="639.0" cy="353.0" r="3.4"/><circle cx="641.9" cy="354.7" r="3.0"/><circle cx="642.6" cy="350.4" r="3.2"/><circle cx="639.7" cy="355.0" r="2.6"/><circle cx="640.0" cy="349.1" r="2.3"/>
<circle cx="622.0" cy="378.0" r="4.0"/><circle cx="622.2" cy="380.0" r="2.9"/><circle cx="623.3" cy="380.7" r="2.7"/><circle cx="624.4" cy="379.4" r="1.9"/><circle cx="623.9" cy="379.9" r="2.1"/><circle cx="623.7" cy="376.4" r="2.2"/>
<circle cx="655.0" cy="330.0" r="4.0"/><circle cx="655.3" cy="329.0" r="2.8"/><circle cx="656.3" cy="330.5" r="3.2"/><circle cx="654.3" cy="328.5" r="1.9"/><circle cx="657.8" cy="329.5" r="3.0"/><circle cx="656.7" cy="332.1" r="2.3"/>
<circle cx="1086.9" cy="310.0" r="11.2"/><circle cx="1087.4" cy="315.3" r="7.5"/><circle cx="1083.5" cy="314.7" r="5.5"/><circle cx="1090.7" cy="303.2" r="8.3"/><circle cx="1078.4" cy="313.8" r="7.1"/><circle cx="1080.9" cy="306.0" r="8.0"/>
<circle cx="1098.0" cy="326.0" r="7.2"/><circle cx="1096.2" cy="327.4" r="3.2"/><circle cx="1098.6" cy="327.9" r="5.6"/><circle cx="1092.5" cy="326.7" r="3.2"/><circle cx="1091.9" cy="327.2" r="4.8"/><circle cx="1094.3" cy="327.8" r="3.4"/>
<circle cx="1092.0" cy="296.0" r="6.4"/><circle cx="1093.3" cy="297.9" r="3.7"/><circle cx="1087.9" cy="299.6" r="3.2"/><circle cx="1091.9" cy="298.8" r="3.2"/><circle cx="1091.4" cy="298.6" r="4.0"/><circle cx="1097.6" cy="297.1" r="3.7"/>
<circle cx="1106.0" cy="368.0" r="5.6"/><circle cx="1109.7" cy="366.5" r="3.9"/><circle cx="1101.0" cy="368.9" r="2.7"/><circle cx="1104.8" cy="365.8" r="3.9"/><circle cx="1105.7" cy="366.0" r="2.9"/><circle cx="1108.3" cy="368.4" r="2.6"/>
<circle cx="1045.4" cy="191.0" r="4.8"/><circle cx="1041.8" cy="193.6" r="2.8"/><circle cx="1044.4" cy="193.5" r="2.6"/><circle cx="1045.0" cy="187.5" r="2.4"/><circle cx="1045.6" cy="194.4" r="3.8"/><circle cx="1043.8" cy="188.9" r="3.9"/>
<circle cx="1014.0" cy="198.0" r="3.2"/><circle cx="1014.9" cy="198.0" r="2.3"/><circle cx="1013.2" cy="198.5" r="2.1"/><circle cx="1015.9" cy="197.9" r="1.8"/><circle cx="1014.8" cy="198.5" r="2.5"/><circle cx="1011.1" cy="198.2" r="1.5"/>
<circle cx="1022.0" cy="214.0" r="3.2"/><circle cx="1022.0" cy="214.9" r="1.9"/><circle cx="1023.3" cy="214.5" r="1.9"/><circle cx="1021.7" cy="214.9" r="1.4"/><circle cx="1023.2" cy="213.8" r="2.0"/><circle cx="1020.4" cy="215.1" r="1.5"/>
<circle cx="1062.0" cy="262.0" r="4.0"/><circle cx="1061.5" cy="263.2" r="2.6"/><circle cx="1064.3" cy="260.7" r="3.0"/><circle cx="1062.2" cy="263.0" r="2.6"/><circle cx="1059.4" cy="262.2" r="2.3"/><circle cx="1059.9" cy="259.9" r="3.1"/>
<circle cx="1072.0" cy="282.0" r="4.0"/><circle cx="1071.2" cy="284.1" r="3.0"/><circle cx="1072.2" cy="283.3" r="2.2"/><circle cx="1074.7" cy="283.6" r="3.0"/><circle cx="1071.5" cy="283.3" r="1.9"/><circle cx="1072.0" cy="283.2" r="2.4"/>
<circle cx="535.8" cy="538.0" r="3.1"/>
<circle cx="538.5" cy="555.0" r="2.6"/>
<circle cx="540.0" cy="568.6" r="2.3"/>
<circle cx="541.3" cy="582.5" r="3.3"/>
<circle cx="544.0" cy="597.7" r="2.3"/>
<circle cx="545.4" cy="613.0" r="2.5"/>
<circle cx="548.2" cy="626.7" r="2.7"/>
<circle cx="551.0" cy="640.0" r="2.8"/>
<circle cx="553.0" cy="655.0" r="2.4"/>
<circle cx="555.0" cy="672.0" r="2.9"/>
<circle cx="558.0" cy="690.0" r="2.7"/>
<circle cx="560.0" cy="706.0" r="3.4"/>
<circle cx="563.0" cy="722.0" r="3.1"/>
<circle cx="565.0" cy="740.0" r="3.6"/>
<circle cx="567.0" cy="757.0" r="3.2"/>
<circle cx="569.0" cy="772.0" r="3.4"/>
<circle cx="571.0" cy="790.0" r="3.1"/>
<circle cx="574.0" cy="806.0" r="2.9"/>
<circle cx="576.0" cy="822.0" r="3.5"/>
<circle cx="578.0" cy="835.0" r="3.2"/>
</g>
<g filter="url(#veg2)">
<polygon points="1000.0,180.0 1050.0,180.0 1072.0,196.0 1070.0,235.0 1056.0,262.0 1068.0,285.0 1100.0,296.0 1116.0,332.0 1112.0,366.0 1104.0,373.0 1030.0,241.0" fill="#fff"/>
<polygon points="780.0,271.0 830.0,250.0 863.0,244.0 856.0,232.0 800.0,240.0 770.0,258.0" fill="#fff"/>
</g>
<polyline points="744.0,296.7 730.0,303.0 717.0,313.0 699.0,338.0 680.0,366.0 671.0,384.0" stroke="#85898b" stroke-width="3.6" fill="none" filter="url(#rough)"/>
<g stroke="#f0f0f0" fill="none" stroke-width="1.3">
<polyline points="1102.0,373.5 1104.0,380.0 1100.0,398.0 1079.8,409.7 1072.9,397.6 1059.0,404.6 1061.6,414.1 1048.7,421.0 1043.5,413.2 1028.8,421.0 1033.1,431.3 1018.5,439.1 1013.3,428.7 990.8,440.0 995.1,451.2 981.3,459.0 976.1,448.6 946.8,463.3 951.1,473.7 936.4,480.6 931.2,471.1 915.7,478.0 919.1,488.3 906.2,494.7 901.0,487.5 863.0,506.5 886.4,550.7"/>
<polyline points="603.3,639.4 727.7,577.0 756.7,629.5" stroke-width="1.5"/>
<polyline points="603.3,639.4 635.0,697.4" stroke-width="2.5"/>
<polyline points="606.5,641.0 637.0,694.0" stroke-width="1" transform="translate(3 -1)"/>
<polyline points="613.0,405.5 579.8,444.2 557.6,480.2 542.4,501.0 549.4,512.0" stroke-width="1" opacity=".8"/>
<polyline points="646.0,293.8 657.6,303.9 666.2,296.7" opacity=".75" stroke-width="1"/>
<polyline points="683.5,293.8 692.1,298.1 702.2,285.2" opacity=".75" stroke-width="1"/>
<polyline points="699.3,276.5 710.9,266.5" opacity=".75" stroke-width="1"/>
<polyline points="715.2,263.6 729.6,252.1" opacity=".75" stroke-width="1"/>
<polyline points="627.4,314.0 651.8,337.0 664.8,326.9" opacity=".75" stroke-width="1"/>
<polyline points="567.3,362.5 568.7,376.3 549.4,379.1 554.9,420.0" opacity=".75" stroke-width="1"/>
<polyline points="552.1,400.0 556.8,436.0 516.2,441.5" opacity=".75" stroke-width="1"/>
<polyline points="509.3,431.8 519.0,506.4" opacity=".75" stroke-width="1"/>
<polyline points="477.5,498.1 480.2,520.3 449.8,531.3" opacity=".75" stroke-width="1"/>
<polyline points="480.2,572.8 484.4,588.0 452.6,597.7" opacity=".75" stroke-width="1"/>
<polyline points="487.1,622.6 492.7,638.0 469.2,644.9" opacity=".75" stroke-width="1"/>
<polyline points="921.0,528.6 934.8,524.4" opacity=".75" stroke-width="1"/>
<polyline points="922.4,542.4 934.8,536.9" opacity=".75" stroke-width="1"/>
<polyline points="940.4,530.0 968.0,524.4" opacity=".75" stroke-width="1"/>
<polyline points="1004.0,498.1 1023.3,489.9" opacity=".75" stroke-width="1"/>
<polyline points="1045.4,477.4 1059.2,471.9" opacity=".75" stroke-width="1"/>
<polyline points="1084.0,476.0 1092.4,473.3" opacity=".75" stroke-width="1"/>
<polyline points="1084.0,458.0 1100.7,449.8" opacity=".75" stroke-width="1"/>
</g>
<g stroke="#e0e0e0" fill="none" stroke-width="1.1" opacity=".7">
<polyline points="761.2,259.3 900.0,181.5" stroke-dasharray="4 5 2 7 6 4"/>
<polyline points="495.4,644.9 521.7,835.7" stroke-dasharray="3 4 7 3 2 6"/>
<polyline points="503.0,672.0 525.0,835.0" stroke-dasharray="2 7 4 5 1 8" transform="translate(6 0)"/>
</g>
<g stroke="#e8e8e8" stroke-width="1" opacity=".7">
<path d="M506.1 698.2l6.9 -1.0"/>
<path d="M480.6 673.4l2.4 -0.4"/>
<path d="M463.5 697.3l6.1 -0.9"/>
<path d="M472.8 661.4l6.6 -1.0"/>
<path d="M494.6 654.9l2.3 -0.3"/>
<path d="M460.4 714.3l7.2 -1.1"/>
<path d="M468.5 727.2l4.2 -0.6"/>
<path d="M476.4 652.2l5.5 -0.8"/>
<path d="M516.2 780.8l2.6 -0.4"/>
<path d="M492.4 680.8l6.3 -0.9"/>
<path d="M485.7 818.9l6.8 -1.0"/>
<path d="M459.5 707.1l7.5 -1.1"/>
<path d="M486.9 728.1l4.6 -0.7"/>
<path d="M511.4 818.5l5.2 -0.8"/>
<path d="M458.3 796.6l4.5 -0.7"/>
<path d="M454.2 826.0l2.2 -0.3"/>
<path d="M496.2 736.8l7.3 -1.1"/>
<path d="M481.4 688.8l3.7 -0.5"/>
<path d="M466.1 751.2l4.1 -0.6"/>
<path d="M478.1 694.7l7.9 -1.2"/>
<path d="M517.2 803.0l5.7 -0.9"/>
<path d="M482.1 675.7l7.0 -1.0"/>
<path d="M489.2 656.8l3.0 -0.5"/>
<path d="M457.9 779.2l7.4 -1.1"/>
<path d="M465.9 793.5l3.9 -0.6"/>
<path d="M504.6 805.4l5.7 -0.9"/>
<path d="M450.8 742.1l5.5 -0.8"/>
<path d="M464.8 720.0l3.9 -0.6"/>
<path d="M452.2 706.2l4.3 -0.6"/>
<path d="M488.1 776.6l4.4 -0.7"/>
<path d="M503.6 746.6l6.8 -1.0"/>
<path d="M479.0 756.8l6.1 -0.9"/>
<path d="M491.8 701.2l2.5 -0.4"/>
<path d="M457.0 714.1l5.5 -0.8"/>
<path d="M510.8 778.6l3.8 -0.6"/>
<path d="M510.3 770.6l7.7 -1.2"/>
<path d="M517.1 783.0l5.7 -0.8"/>
<path d="M466.7 743.0l7.4 -1.1"/>
<path d="M469.1 825.4l5.3 -0.8"/>
<path d="M481.5 650.5l4.3 -0.7"/>
<path d="M464.3 767.6l7.4 -1.1"/>
<path d="M480.9 669.6l6.1 -0.9"/>
<path d="M494.3 778.7l4.2 -0.6"/>
<path d="M474.4 698.2l5.7 -0.9"/>
<path d="M500.6 788.0l3.3 -0.5"/>
<path d="M455.0 751.9l7.0 -1.0"/>
<path d="M483.3 726.6l5.2 -0.8"/>
<path d="M472.5 759.0l7.8 -1.2"/>
<path d="M465.0 655.5l2.7 -0.4"/>
<path d="M495.0 758.6l3.1 -0.5"/>
<path d="M465.2 757.0l5.9 -0.9"/>
<path d="M505.2 781.2l2.4 -0.4"/>
<path d="M488.8 800.2l7.7 -1.2"/>
<path d="M475.5 803.1l5.9 -0.9"/>
<path d="M512.7 605.0l1.0 1.3"/>
<path d="M467.4 454.5l0.2 1.5"/>
<path d="M505.4 443.1l1.5 3.2"/>
<path d="M523.5 596.8l1.4 3.8"/>
<path d="M536.1 557.5l1.9 1.3"/>
<path d="M459.3 434.2l0.4 2.1"/>
<path d="M491.3 569.7l1.5 1.3"/>
<path d="M486.3 539.6l0.8 1.4"/>
<path d="M503.7 502.4l1.4 2.5"/>
<path d="M536.6 627.9l0.1 3.3"/>
<path d="M514.9 485.1l0.2 2.4"/>
<path d="M481.9 582.2l1.8 2.1"/>
<path d="M476.2 529.7l1.4 3.4"/>
<path d="M501.8 485.1l0.7 3.5"/>
<path d="M496.7 431.1l0.8 1.7"/>
<path d="M510.0 436.1l0.5 1.3"/>
<path d="M493.0 636.6l1.1 2.2"/>
<path d="M534.1 440.2l0.7 3.4"/>
<path d="M450.5 588.5l0.7 1.0"/>
<path d="M472.6 520.8l0.8 2.6"/>
<path d="M454.8 468.1l1.9 2.3"/>
<path d="M492.5 438.8l0.6 3.9"/>
<path d="M511.8 531.7l0.1 2.2"/>
<path d="M520.1 515.6l1.2 3.7"/>
<path d="M508.1 559.9l0.1 1.1"/>
<path d="M519.3 510.9l1.7 3.5"/>
<path d="M532.4 503.3l2.0 3.3"/>
<path d="M530.3 452.6l1.6 2.3"/>
<path d="M537.5 638.7l0.4 2.3"/>
<path d="M474.4 523.4l0.6 3.0"/>
<path d="M461.1 457.2l0.9 1.2"/>
<path d="M484.3 617.4l1.8 1.6"/>
<path d="M451.7 602.2l1.9 2.8"/>
<path d="M462.3 472.0l1.8 3.8"/>
<path d="M452.8 460.7l0.9 1.8"/>
<path d="M517.8 502.0l1.6 1.5"/>
<path d="M496.6 634.5l1.4 1.3"/>
<path d="M460.0 561.6l0.7 2.1"/>
<path d="M493.0 548.0l1.9 1.7"/>
<path d="M501.2 477.9l1.1 3.2"/>
</g>
<g fill="#fff">
<circle cx="581" cy="653" r="1.8"/>
<circle cx="593.6" cy="647.6" r="1.8"/>
<circle cx="604.6" cy="703" r="1.8"/>
<circle cx="614.3" cy="698.8" r="1.8"/>
<circle cx="635" cy="733.4" r="1.8"/>
<circle cx="604.6" cy="750" r="1.8"/>
</g>
<rect x="552" y="101.400" width="454.500" height="82.500" rx="41.250" fill="#161b1f" fill-opacity=".9"/><circle cx="952.800" cy="142.600" r="17.900" fill="none" stroke="#f29a9a" stroke-width="2.900"/><rect x="964" y="101.400" width="142.500" height="82.500" rx="41.250" fill="#161b1f" fill-opacity=".82"/><rect x="596.400" y="126" width="31.700" height="32.500" rx="8" fill="#aaaaaa"/><text x="612.300" y="146.600" text-anchor="middle" font-family="Liberation Sans,DejaVu Sans,sans-serif" font-weight="700" font-size="11.500" fill="#222">P</text><circle cx="686.400" cy="142.400" r="21.800" fill="#c2c2c2"/><circle cx="686.400" cy="142.400" r="15.050" fill="none" stroke="#161b1f" stroke-width="4.100"/><rect x="668" y="139.650" width="36.800" height="5.500" fill="#c2c2c2"/><rect x="683.800" y="154" width="5.200" height="6" fill="#c2c2c2"/><text x="686.900" y="145.500" text-anchor="middle" font-family="Liberation Sans,DejaVu Sans,sans-serif" font-weight="700" font-size="8.600" fill="#222" letter-spacing="1">N/A</text><path d="M745 126.800l-12 12.400 12 12.400" stroke="#555555" stroke-width="2.600" fill="none"/><path d="M820 126.800l12 12.400-12 12.400" stroke="#555555" stroke-width="2.600" fill="none"/><text transform="translate(782.300 153.300) scale(1.15 .985)" x="0" y="0" text-anchor="middle" font-family="DejaVu Sans Light,DejaVu Sans,Liberation Sans,sans-serif" font-weight="200" font-size="42" fill="#cccccc">0</text><text x="780.500" y="166.600" text-anchor="middle" font-family="Liberation Sans,DejaVu Sans,sans-serif" font-size="9.400" fill="#bbbbbb" letter-spacing=".85">km/h</text><circle cx="883.750" cy="142.600" r="20.800" fill="#4e4e4e"/><g fill="#353535"><rect x="878.600" y="133.400" width="10.300" height="18.600" rx="1.500"/><path d="M875.500 136h3.500v3.300c-2 0-3.500-1.400-3.500-3.300zM875.500 141.300h3.500v3.300c-2 0-3.500-1.400-3.500-3.300zM875.500 146.600h3.500v3.300c-2 0-3.500-1.400-3.500-3.300zM892 136h-3.500v3.300c2 0 3.500-1.400 3.500-3.300zM892 141.300h-3.500v3.300c2 0 3.500-1.400 3.500-3.300zM892 146.600h-3.500v3.300c2 0 3.500-1.400 3.500-3.300z"/></g><g fill="#4e4e4e"><circle cx="883.750" cy="137.200" r="1.700"/><circle cx="883.750" cy="142.700" r="1.700"/><circle cx="883.750" cy="148.200" r="1.700"/></g><text x="952.600" y="148.300" text-anchor="middle" font-family="Liberation Sans,DejaVu Sans,sans-serif" font-size="15.500" fill="#cccccc" letter-spacing="-.6">15</text><g stroke="#e6e6e6" fill="none" stroke-width="2"><circle cx="992.700" cy="123.100" r="2.300"/><path d="M995.500 123.100h5.500a2.650 2.650 0 0 1 0 5.300h-3.800a2.650 2.650 0 0 0 0 5.300h5"/></g><circle cx="1005" cy="133.700" r="3.300" fill="#e6e6e6"/><g stroke="#e6e6e6" fill="none" stroke-width="2.100" stroke-linecap="round"><path d="M998.750 148.300a9.400 9.400 0 1 1 -6.650 2.750"/><path d="M992.300 150.800l6.300 7.200M998.750 148.300v4"/></g><g fill="#e6e6e6"><circle cx="994.500" cy="157.400" r="1.250"/><circle cx="998.750" cy="162.100" r="1.250"/><circle cx="1003.300" cy="157.400" r="1.250"/></g><text x="1075.600" y="134.400" text-anchor="end" font-family="Liberation Sans,DejaVu Sans,sans-serif" font-size="16" fill="#c8c8c8" stroke="#c8c8c8" stroke-width=".3" letter-spacing=".7">0.0 m</text><text x="1086.700" y="163.300" text-anchor="end" font-family="Liberation Sans,DejaVu Sans,sans-serif" font-size="16" fill="#c8c8c8" stroke="#c8c8c8" stroke-width=".3" letter-spacing=".4">0 sec</text>
</svg>
<svg class="abs" style="left:1124px;top:86px;z-index:2" width="412" height="764" viewBox="1124 86 412 764"><rect x="1152" y="93" width="4" height="8.300" fill="#e08585"/><rect x="1156" y="93" width="4" height="8.300" fill="#86d886"/><rect x="1160" y="93" width="4" height="8.300" fill="#a9a4f2"/><rect x="1152" y="93" width="12" height="8.300" fill="none" stroke="#ddd" stroke-width=".5"/><rect x="1154.600" y="103.500" width="6.800" height="1.200" fill="#999"/><rect x="1156.500" y="101.500" width="3" height="2" fill="#222"/><path d="M1519.300 94.400l6.300 6.300M1525.600 94.400l-6.300 6.300" stroke="#8fd3f5" stroke-width="1.500"/><path d="M1151 116.5l4.800 4.300-4.800 4.300z" fill="#8ad0f0"/><path d="M1151 135.5l4.800 4.300-4.800 4.300z" fill="#8ad0f0"/><path d="M1151 154.5l4.800 4.300-4.800 4.300z" fill="#8ad0f0"/><path d="M1151 173.6l4.800 4.300-4.800 4.300z" fill="#8ad0f0"/><path d="M1151 192.6l4.800 4.300-4.800 4.300z" fill="#8ad0f0"/><path d="M1151 211.6l4.800 4.300-4.800 4.300z" fill="#8ad0f0"/><path d="M1151 230.6l4.800 4.300-4.800 4.300z" fill="#8ad0f0"/><path d="M1151 249.6l4.800 4.300-4.800 4.300z" fill="#8ad0f0"/><path d="M1151 268.7l4.800 4.300-4.800 4.300z" fill="#8ad0f0"/><path d="M1151 287.7l4.800 4.300-4.800 4.300z" fill="#8ad0f0"/><g fill="#5b8fd6"><rect x="1174.05" y="114.7" width="1.900" height="11.200" transform="rotate(0 1175 120.3)"/><rect x="1174.05" y="114.7" width="1.900" height="11.200" transform="rotate(45 1175 120.3)"/><rect x="1174.05" y="114.7" width="1.900" height="11.200" transform="rotate(90 1175 120.3)"/><rect x="1174.05" y="114.7" width="1.900" height="11.200" transform="rotate(135 1175 120.3)"/><circle cx="1175" cy="120.3" r="3.900"/></g><circle cx="1175" cy="120.3" r="2.200" fill="#0f1417"/><path d="M1170 140.400l2.600 3.400 7.600-10" stroke="#1c8c1c" stroke-width="1.500" fill="none"/><g transform="translate(1169 152.8)"><path d="M.3 1.300l.8-1.100h4.800l.9 1.400h4.800v2h-11.300z" fill="#c9c9c9"/><path d="M.6 2.600h10.600v8.600h-10.600z" fill="#d8d8d8"/><path d="M1.300 3.600h11.400l-.7 8h-10.700z" fill="url(#fold)" stroke="#2f5fa8" stroke-width=".5"/></g><g transform="translate(1169 171.9)"><path d="M.3 1.300l.8-1.100h4.800l.9 1.400h4.800v2h-11.300z" fill="#c9c9c9"/><path d="M.6 2.600h10.600v8.600h-10.600z" fill="#d8d8d8"/><path d="M1.300 3.600h11.400l-.7 8h-10.700z" fill="url(#fold)" stroke="#2f5fa8" stroke-width=".5"/></g><g transform="translate(1169 190.9)"><path d="M.3 1.300l.8-1.100h4.800l.9 1.400h4.800v2h-11.300z" fill="#c9c9c9"/><path d="M.6 2.600h10.600v8.600h-10.600z" fill="#d8d8d8"/><path d="M1.300 3.600h11.400l-.7 8h-10.700z" fill="url(#fold)" stroke="#2f5fa8" stroke-width=".5"/></g><g transform="translate(1169 209.9)"><path d="M.3 1.300l.8-1.100h4.800l.9 1.400h4.800v2h-11.300z" fill="#c9c9c9"/><path d="M.6 2.600h10.600v8.600h-10.600z" fill="#d8d8d8"/><path d="M1.300 3.600h11.400l-.7 8h-10.700z" fill="url(#fold)" stroke="#2f5fa8" stroke-width=".5"/></g><g transform="translate(1169 228.9)"><path d="M.3 1.300l.8-1.100h4.800l.9 1.400h4.800v2h-11.300z" fill="#c9c9c9"/><path d="M.6 2.600h10.600v8.600h-10.600z" fill="#d8d8d8"/><path d="M1.300 3.600h11.400l-.7 8h-10.700z" fill="url(#fold)" stroke="#2f5fa8" stroke-width=".5"/></g><g transform="translate(1169 247.9)"><path d="M.3 1.300l.8-1.100h4.800l.9 1.400h4.800v2h-11.300z" fill="#c9c9c9"/><path d="M.6 2.600h10.600v8.600h-10.600z" fill="#d8d8d8"/><path d="M1.300 3.600h11.400l-.7 8h-10.700z" fill="url(#fold)" stroke="#2f5fa8" stroke-width=".5"/></g><g transform="translate(1169 267.0)"><path d="M.3 1.300l.8-1.100h4.800l.9 1.400h4.800v2h-11.300z" fill="#c9c9c9"/><path d="M.6 2.600h10.600v8.600h-10.600z" fill="#d8d8d8"/><path d="M1.300 3.600h11.400l-.7 8h-10.700z" fill="url(#fold)" stroke="#2f5fa8" stroke-width=".5"/></g><g transform="translate(1169 286.0)"><path d="M.3 1.300l.8-1.100h4.800l.9 1.400h4.800v2h-11.300z" fill="#c9c9c9"/><path d="M.6 2.600h10.600v8.600h-10.600z" fill="#d8d8d8"/><path d="M1.300 3.600h11.400l-.7 8h-10.700z" fill="url(#fold)" stroke="#2f5fa8" stroke-width=".5"/></g><defs><linearGradient id="fold" x1="0" y1="0" x2="0" y2="1"><stop offset="0" stop-color="#a9c8f0"/><stop offset="1" stop-color="#4f86d0"/></linearGradient></defs><path d="M1364.500 111.500v190" stroke="#2a2f33" stroke-width="1"/><rect x="1369.800" y="152.60000000000002" width="12.400" height="12.400" rx="1.800" fill="#8ad0f0"/><path d="M1373 159.0l2.300 2.300 4.200-4.600" stroke="#0c2430" stroke-width="1.700" fill="none"/><rect x="1369.800" y="171.70000000000002" width="12.400" height="12.400" rx="1.800" fill="#8ad0f0"/><path d="M1373 178.1l2.300 2.300 4.200-4.600" stroke="#0c2430" stroke-width="1.700" fill="none"/><rect x="1369.800" y="190.70000000000002" width="12.400" height="12.400" rx="1.800" fill="#8ad0f0"/><path d="M1373 197.1l2.300 2.300 4.200-4.600" stroke="#0c2430" stroke-width="1.700" fill="none"/><rect x="1369.800" y="209.70000000000002" width="12.400" height="12.400" rx="1.800" fill="#8ad0f0"/><path d="M1373 216.1l2.300 2.300 4.200-4.600" stroke="#0c2430" stroke-width="1.700" fill="none"/><rect x="1369.800" y="228.70000000000002" width="12.400" height="12.400" rx="1.800" fill="#8ad0f0"/><path d="M1373 235.1l2.300 2.300 4.200-4.600" stroke="#0c2430" stroke-width="1.700" fill="none"/><rect x="1369.800" y="247.70000000000002" width="12.400" height="12.400" rx="1.800" fill="#8ad0f0"/><path d="M1373 254.1l2.300 2.300 4.200-4.600" stroke="#0c2430" stroke-width="1.700" fill="none"/><rect x="1369.800" y="266.8" width="12.400" height="12.400" rx="1.800" fill="#8ad0f0"/><path d="M1373 273.2l2.300 2.300 4.200-4.600" stroke="#0c2430" stroke-width="1.700" fill="none"/><rect x="1370.500" y="286.4" width="11.200" height="11.200" rx="1.500" fill="none" stroke="#8ad0f0" stroke-width="1.400"/><rect x="1148" y="301.700" width="388" height="56.500" fill="#13181b"/><rect x="1330.800" y="307" width="22" height="2.200" rx="1" fill="#c8cacb"/><rect x="1330.800" y="351" width="22" height="2.200" rx="1" fill="#c8cacb"/><rect x="1150.600" y="320" width="91.200" height="21.400" rx="10.700" fill="#8ad0f0"/><rect x="1248.2" y="320" width="90.700" height="21.400" rx="10.700" fill="#2a2e31"/><rect x="1345.7" y="320" width="90.700" height="21.400" rx="10.700" fill="#2a2e31"/><rect x="1443.2" y="320" width="90.700" height="21.400" rx="10.700" fill="#2a2e31"/><path d="M1151 367l4 2v4l-4 2z" fill="#555a5d"/><rect x="1154.500" y="366.800" width="10" height="8.400" rx="2.500" fill="#555a5d"/><path d="M1519.300 367.300l6.300 6.300M1525.600 367.300l-6.300 6.300" stroke="#8fd3f5" stroke-width="1.500"/><rect x="1183.700" y="389.500" width="287.500" height="22.500" fill="#1c2125"/><rect x="1183.700" y="411.200" width="287.500" height="1" fill="#9a9ea0"/><path d="M1461 398l3.500 5.500 3.500-5.500z" fill="#3d4246"/><rect x="1477.300" y="389.800" width="56.200" height="21.400" rx="10.700" fill="#8ad0f0"/><path d="M1343.500 419v371.500" stroke="#2a2f33" stroke-width="1"/><path d="M1150.300 426.300h7.400l-3.700 4.200z" fill="#8ad0f0"/><path d="M1151 545.7l4.800 4.300-4.800 4.300z" fill="#8ad0f0"/><path d="M1151 563.2l4.800 4.300-4.800 4.300z" fill="#8ad0f0"/><rect x="1150.3" y="796.800" width="123.500" height="21.400" rx="10.700" fill="#8ad0f0"/><rect x="1280.6" y="796.800" width="123.500" height="21.400" rx="10.700" fill="#8ad0f0"/><rect x="1409.7" y="796.800" width="123.500" height="21.400" rx="10.700" fill="#8ad0f0"/><rect x="1147.800" y="820.800" width="62.400" height="24.700" fill="#2a2f33"/><rect x="1147.800" y="820.800" width="62.400" height="1.800" fill="#8ad0f0"/></svg>
<div class="t " style="left:1170px;top:91.6px;">Displays</div>
<div class="t " style="left:1187.3px;top:113.6px;z-index:3">Global Options</div>
<div class="t " style="left:1187.3px;top:132.6px;z-index:3">Global Status: Ok</div>
<div class="t b" style="left:1187.3px;top:151.6px;z-index:3">System</div>
<div class="t b" style="left:1187.3px;top:170.6px;z-index:3">Map</div>
<div class="t b" style="left:1187.3px;top:190.6px;z-index:3">Sensing</div>
<div class="t b" style="left:1187.3px;top:209.6px;z-index:3">Localization</div>
<div class="t b" style="left:1187.3px;top:228.6px;z-index:3">Perception</div>
<div class="t b" style="left:1187.3px;top:247.6px;z-index:3">Planning</div>
<div class="t b" style="left:1187.3px;top:266.6px;z-index:3">Control</div>
<div class="t " style="left:1187.3px;top:285.6px;z-index:3">Debug</div>
<div class="t b" style="left:1096.3px;width:200px;text-align:center;top:324.6px;color:#003a52;z-index:3">Add</div>
<div class="t b" style="left:1193.6px;width:200px;text-align:center;top:324.6px;color:#6c7174;z-index:3">Duplicate</div>
<div class="t b" style="left:1291.0px;width:200px;text-align:center;top:324.6px;color:#6c7174;z-index:3">Remove</div>
<div class="t b" style="left:1388.5px;width:200px;text-align:center;top:324.6px;color:#6c7174;z-index:3">Rename</div>
<div class="t " style="left:1169.6px;top:364.6px;z-index:3">Views</div>
<div class="t " style="left:1150.3px;top:394.6px;z-index:3">Type:</div>
<div class="t " style="left:1185.7px;top:394.6px;z-index:3">TopDownOrtho (rviz_default_plugins)</div>
<div class="t b" style="left:1405.4px;width:200px;text-align:center;top:394.6px;color:#003a52;z-index:3">Zero</div>
<div class="t b" style="left:1169px;top:421.6px;z-index:3">Current View</div>
<div class="t b" style="left:1346.7px;top:421.6px;z-index:3">TopDownOrtho (rviz_default_…</div>
<div class="t " style="left:1185.7px;top:438.6px;z-index:3">Near Clip Distance</div>
<div class="t " style="left:1346.7px;top:438.6px;z-index:3">0.01</div>
<div class="t " style="left:1185.7px;top:456.6px;z-index:3">Target Frame</div>
<div class="t " style="left:1346.7px;top:456.6px;z-index:3">viewer</div>
<div class="t " style="left:1185.7px;top:473.6px;z-index:3">Scale</div>
<div class="t " style="left:1346.7px;top:473.6px;z-index:3">2.26352</div>
<div class="t " style="left:1185.7px;top:491.6px;z-index:3">Angle</div>
<div class="t " style="left:1346.7px;top:491.6px;z-index:3">0</div>
<div class="t " style="left:1185.7px;top:508.6px;z-index:3">X</div>
<div class="t " style="left:1346.7px;top:508.6px;z-index:3">0</div>
<div class="t " style="left:1185.7px;top:525.6px;z-index:3">Y</div>
<div class="t " style="left:1346.7px;top:525.6px;z-index:3">0</div>
<div class="t " style="left:1169px;top:543.6px;z-index:3">ThirdPersonFollower</div>
<div class="t " style="left:1346.7px;top:543.6px;z-index:3">ThirdPersonFollower (rviz)</div>
<div class="t " style="left:1169px;top:560.6px;z-index:3">TopDownOrtho</div>
<div class="t " style="left:1346.7px;top:560.6px;z-index:3">TopDownOrtho (rviz)</div>
<div class="t b" style="left:1112.0px;width:200px;text-align:center;top:800.6px;color:#003a52;z-index:3">Save</div>
<div class="t b" style="left:1242.0px;width:200px;text-align:center;top:800.6px;color:#003a52;z-index:3">Remove</div>
<div class="t b" style="left:1371.5px;width:200px;text-align:center;top:800.6px;color:#003a52;z-index:3">Rename</div>
<div class="t b" style="left:1078.8px;width:200px;text-align:center;top:827.6px;color:#f0f2f3;z-index:3">Views</div>
<div class="t b" style="left:1224px;top:827.6px;color:#f0f2f3;z-index:3">Tool Properties</div>
<div class="abs" style="left:5px;top:849.700px;width:43.500px;height:18.300px;background:#161b1e"></div>
<div class="t " style="left:12.8px;top:852.6px;color:#62a6d6">Reset</div>
<div class="t " style="left:55.8px;top:852.6px;word-spacing:.62px"><b>Left-Click:</b> Rotate. <b>Middle-Click:</b> Move X/Y. <b>Right-Click:</b> Zoom. <b>Shift:</b> More options.</div>
<div class="t " style="left:1502.3px;top:848.6px;">31 fps</div>
<svg class="abs" style="left:408px;top:84px;z-index:1" width="744" height="764" viewBox="408 84 744 764">
<rect x="412" y="85.400" width="12.700" height="759.900" fill="#161b1e"/>
<rect x="426.100" y="87.100" width="9.900" height="756.700" fill="#181d20"/>
<rect x="1124.200" y="87.100" width="9.900" height="756.700" fill="#181d20"/>
<rect x="1135.300" y="85.400" width="12.800" height="759.900" fill="#161b1e"/>
<rect x="416.800" y="454" width="3" height="22.300" rx="1.300" fill="#a8acae"/>
<rect x="1140.400" y="454" width="2.800" height="22.300" rx="1.300" fill="#a8acae"/>
<path d="M433 462.300v6l-3.900-3z" fill="#5a9bc0"/>
<path d="M1127.200 462.300v6l3.700-3z" fill="#5a9bc0"/>
</svg>
</body>
</html>
